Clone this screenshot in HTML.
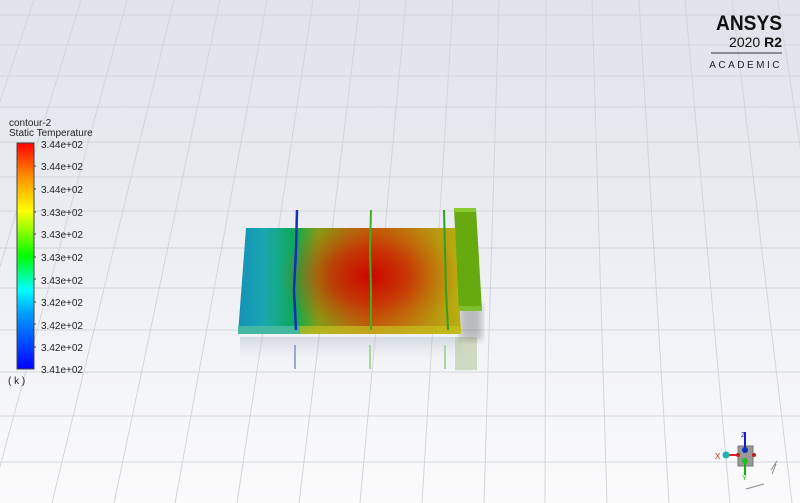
<!DOCTYPE html>
<html><head><meta charset="utf-8"><style>
html,body{margin:0;padding:0;width:800px;height:503px;overflow:hidden;font-family:"Liberation Sans",sans-serif}
</style></head><body>
<svg width="800" height="503" viewBox="0 0 800 503" xmlns="http://www.w3.org/2000/svg">
<defs>
<linearGradient id="bg" x1="0" y1="0" x2="0" y2="1">
<stop offset="0" stop-color="#dfe3ea"/><stop offset="0.5" stop-color="#eceef2"/><stop offset="1" stop-color="#fbfbfc"/></linearGradient>
<linearGradient id="cb" x1="0" y1="1" x2="0" y2="0">
<stop offset="0" stop-color="#0000ff"/><stop offset="0.25" stop-color="#00a0ff"/><stop offset="0.35" stop-color="#00ffff"/><stop offset="0.5" stop-color="#00ff00"/><stop offset="0.7" stop-color="#ffff00"/><stop offset="0.85" stop-color="#ff9000"/><stop offset="1" stop-color="#ff0000"/></linearGradient>
<linearGradient id="plate" x1="0" y1="0" x2="1" y2="0">
<stop offset="0" stop-color="#1590b8"/><stop offset="0.12" stop-color="#18a8b0"/><stop offset="0.26" stop-color="#10a850"/><stop offset="0.36" stop-color="#80a018"/><stop offset="0.6" stop-color="#c06010"/><stop offset="0.85" stop-color="#b89010"/><stop offset="1" stop-color="#b8b010"/></linearGradient>
<radialGradient id="hot" cx="0.5" cy="0.5" r="0.5">
<stop offset="0" stop-color="#cc0000" stop-opacity="0.95"/><stop offset="0.45" stop-color="#cc2000" stop-opacity="0.7"/><stop offset="1" stop-color="#c86000" stop-opacity="0"/></radialGradient>
<linearGradient id="refl" x1="0" y1="0" x2="0" y2="1">
<stop offset="0" stop-color="#9ab" stop-opacity="0.35"/><stop offset="1" stop-color="#fff" stop-opacity="0"/></linearGradient>
<filter id="blur"><feGaussianBlur stdDeviation="4"/></filter>
<clipPath id="pc"><polygon points="246,228 455,228 461,334 238,334"/></clipPath>
</defs>
<rect width="800" height="503" fill="url(#bg)"/>
<g stroke="#d2d5d9" stroke-width="1">
<line x1="0" y1="15" x2="800" y2="15"/><line x1="0" y1="45" x2="800" y2="45"/>
<line x1="0" y1="76" x2="800" y2="76"/><line x1="0" y1="107" x2="800" y2="107"/>
<line x1="0" y1="142" x2="800" y2="142"/><line x1="0" y1="177" x2="800" y2="177"/>
<line x1="0" y1="211" x2="800" y2="211"/><line x1="0" y1="248" x2="800" y2="248"/>
<line x1="0" y1="288" x2="800" y2="288"/><line x1="0" y1="330" x2="800" y2="330"/>
<line x1="0" y1="372" x2="800" y2="372"/><line x1="0" y1="416" x2="800" y2="416"/>
<line x1="0" y1="462" x2="800" y2="462"/>
<line x1="34" y1="0" x2="-134" y2="503"/><line x1="81" y1="0" x2="-72" y2="503"/>
<line x1="127" y1="0" x2="-10" y2="503"/><line x1="174" y1="0" x2="52" y2="503"/>
<line x1="220" y1="0" x2="114" y2="503"/><line x1="267" y1="0" x2="175" y2="503"/>
<line x1="313" y1="0" x2="237" y2="503"/><line x1="360" y1="0" x2="299" y2="503"/>
<line x1="406" y1="0" x2="360" y2="503"/><line x1="453" y1="0" x2="422" y2="503"/>
<line x1="499" y1="0" x2="484" y2="503"/><line x1="546" y1="0" x2="545" y2="503"/>
<line x1="592" y1="0" x2="607" y2="503"/><line x1="639" y1="0" x2="669" y2="503"/>
<line x1="685" y1="0" x2="730" y2="503"/><line x1="732" y1="0" x2="792" y2="503"/>
<line x1="778" y1="0" x2="854" y2="503"/>
</g>
<rect x="240" y="337" width="222" height="32" fill="url(#refl)"/>
<rect x="455" y="337" width="22" height="33" fill="#b8c8a0" opacity="0.6"/>
<line x1="295" y1="345" x2="295" y2="369" stroke="#9aa8d8" stroke-width="2"/>
<line x1="370" y1="345" x2="370" y2="369" stroke="#a8d8a0" stroke-width="2"/>
<line x1="445" y1="345" x2="445" y2="369" stroke="#a8d8a0" stroke-width="2"/>
<rect x="460" y="305" width="22" height="35" fill="#555" opacity="0.35" filter="url(#blur)"/>
<polygon points="246,228 455,228 461,334 238,334" fill="url(#plate)"/>
<ellipse cx="370" cy="276" rx="90" ry="62" fill="url(#hot)" clip-path="url(#pc)"/>
<polygon points="238,326 461,326 461,334 238,334" fill="#c8c020" opacity="0.7"/>
<polygon points="238,326 300,326 300,334 238,334" fill="#30b8b8" opacity="0.8"/>
<polygon points="454,208 476,208 482,311 459,311" fill="#66aa10"/>
<polygon points="454,208 476,208 476,212 455,212" fill="#88c830"/>
<polygon points="459,306 482,306 482,311 459,311" fill="#80c030"/>
<path d="M297,210 L296,250 L294,290 L296,330" stroke="#1030c0" stroke-width="2.5" fill="none"/>
<path d="M371,210 L370,250 L371,290 L371,330" stroke="#40b020" stroke-width="2" fill="none"/>
<path d="M444,210 L445,250 L446,290 L448,330" stroke="#30a020" stroke-width="2" fill="none"/>
<rect x="17" y="143" width="17" height="226" fill="url(#cb)" stroke="#444" stroke-width="1"/>
<g stroke="#444"><line x1="34" y1="166" x2="36" y2="166"/><line x1="34" y1="189" x2="36" y2="189"/><line x1="34" y1="212" x2="36" y2="212"/><line x1="34" y1="234" x2="36" y2="234"/><line x1="34" y1="257" x2="36" y2="257"/><line x1="34" y1="279" x2="36" y2="279"/><line x1="34" y1="302" x2="36" y2="302"/><line x1="34" y1="324" x2="36" y2="324"/><line x1="34" y1="347" x2="36" y2="347"/></g>
<g font-family="Liberation Sans,sans-serif" font-size="10" fill="#222">
<text x="9" y="126">contour-2</text><text x="9" y="136">Static Temperature</text>
<text x="41" y="148">3.44e+02</text><text x="41" y="170">3.44e+02</text><text x="41" y="193">3.44e+02</text>
<text x="41" y="216">3.43e+02</text><text x="41" y="238">3.43e+02</text><text x="41" y="261">3.43e+02</text>
<text x="41" y="284">3.43e+02</text><text x="41" y="306">3.42e+02</text><text x="41" y="329">3.42e+02</text>
<text x="41" y="351">3.42e+02</text><text x="41" y="373">3.41e+02</text><text x="8" y="384">( k )</text>
</g>
<text x="782" y="30" text-anchor="end" font-family="Liberation Sans,sans-serif" font-weight="bold" font-size="21" fill="#111" textLength="66" lengthAdjust="spacingAndGlyphs">ANSYS</text>
<text x="782" y="47" text-anchor="end" font-family="Liberation Sans,sans-serif" font-size="14" fill="#111">2020 <tspan font-weight="bold">R2</tspan></text>
<line x1="711" y1="53" x2="782" y2="53" stroke="#333" stroke-width="1"/>
<text x="782" y="68" text-anchor="end" font-family="Liberation Sans,sans-serif" font-size="10" fill="#222" letter-spacing="2.5">ACADEMIC</text>
<rect x="738" y="446" width="15" height="20" fill="#999" stroke="#777"/>
<line x1="745" y1="432" x2="745" y2="450" stroke="#1020c0" stroke-width="2"/><circle cx="745" cy="450" r="3" fill="#1030c0"/>
<text x="741" y="437" font-size="7" fill="#1020d0" font-family="Liberation Sans,sans-serif">Z</text>
<line x1="745" y1="461" x2="745" y2="475" stroke="#10b010" stroke-width="2"/><circle cx="745" cy="461" r="3" fill="#20c020"/>
<text x="742" y="480" font-size="7" fill="#10c010" font-family="Liberation Sans,sans-serif">Y</text>
<line x1="726" y1="455" x2="738" y2="455" stroke="#e02020" stroke-width="2"/><circle cx="726" cy="455" r="3.5" fill="#20b0b0"/>
<text x="715" y="459" font-size="8" fill="#e02020" font-family="Liberation Sans,sans-serif">X</text>
<circle cx="738" cy="455" r="2" fill="#c02020"/><circle cx="754" cy="455" r="2" fill="#c02020"/>
<path d="M772,474 L776,464 M771,470 L777,461" stroke="#888" fill="none"/>
<path d="M764,484 L746,489" stroke="#888" fill="none"/>
</svg>
</body></html>
